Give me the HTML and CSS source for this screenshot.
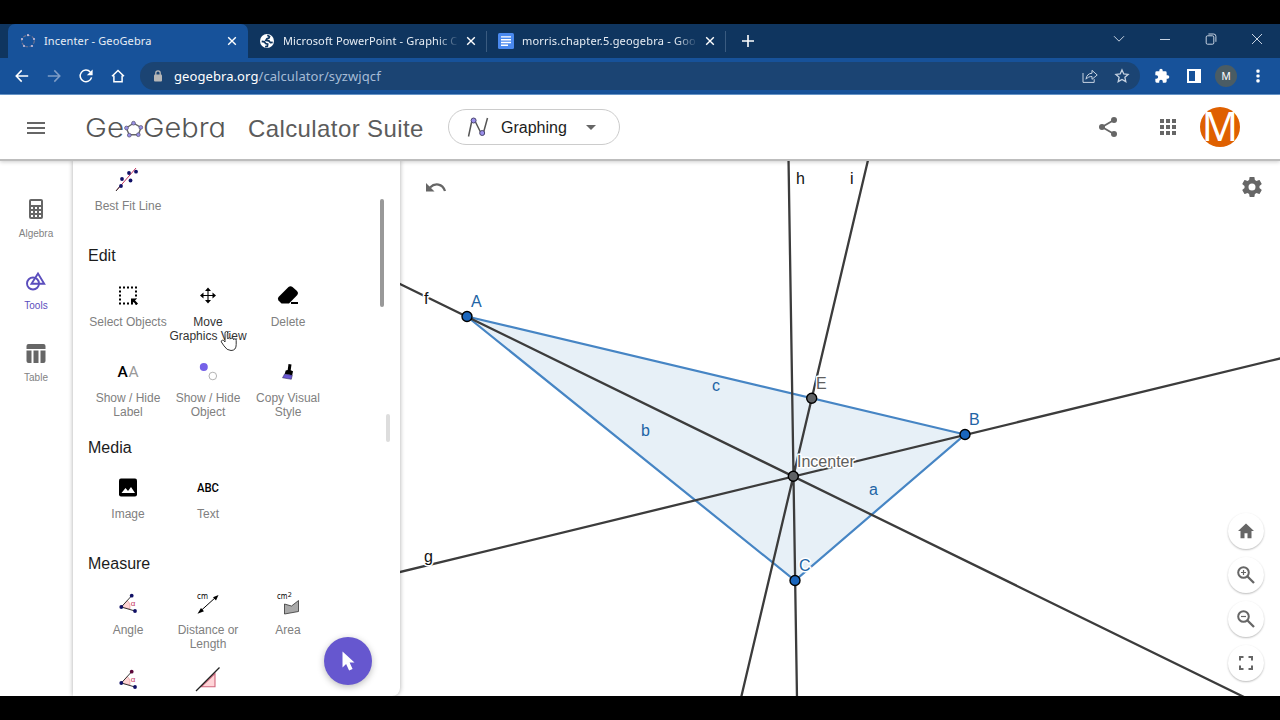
FILE: index.html
```html
<!DOCTYPE html>
<html lang="en">
<head>
<meta charset="utf-8">
<title>Incenter - GeoGebra</title>
<link rel="stylesheet" href="styles.css">
</head>
<body>
<div class="screen">
  <div class="tabs">
    <div class="tab active">
      <svg class="fav" width="16" height="16" viewBox="0 0 16 16"><ellipse cx="8" cy="8" rx="6.3" ry="5.7" fill="none" stroke="#6f7390" stroke-width="1.1" stroke-dasharray="3 1.5"/><g fill="#c6bfdd"><circle cx="8" cy="2.2" r="1.1"/><circle cx="14" cy="6" r="1.1"/><circle cx="12" cy="13" r="1.1"/><circle cx="4" cy="13" r="1.1"/><circle cx="2" cy="6" r="1.1"/></g></svg>
      <span class="tab-title">Incenter - GeoGebra</span>
      <svg class="x" width="10" height="10" viewBox="0 0 10 10"><path d="M1.2 1.2l7.600 7.600M8.800 1.200L1.200 8.800"/></svg>
    </div>
    <div class="tab second">
      <svg class="fav" width="16" height="16" viewBox="0 0 16 16"><circle cx="8" cy="8" r="7" fill="#fff"/><path d="M8.300 2.200l2.200 1.300-.6 1.600-2 .6-1 1.600 3 .6 1.600 1.800 2.200-.3M2.700 8.300l2.500.5 1.500 1.700 2 .6-.4 2.300-2.200.2" fill="none" stroke="#0f355f" stroke-width="1.700"/></svg>
      <span class="tab-title fade">Microsoft PowerPoint - Graphic C</span>
      <svg class="x" width="10" height="10" viewBox="0 0 10 10"><path d="M1.200 1.200l7.600 7.600M8.800 1.200L1.200 8.800"/></svg>
    </div>
    <div class="tab third">
      <svg class="fav" width="16" height="16" viewBox="0 0 16 16"><rect width="16" height="16" rx="1.500" fill="#4a89ee"/><path d="M3 3.900h10M3 6.700h10M3 9.500h10M3 12.300h7" stroke="#fff" stroke-width="1.400"/></svg>
      <span class="tab-title fade">morris.chapter.5.geogebra - Goo</span>
      <svg class="x" width="10" height="10" viewBox="0 0 10 10"><path d="M1.200 1.200l7.600 7.600M8.800 1.200L1.200 8.800"/></svg>
    </div>
    <svg class="plus" width="12" height="12" viewBox="0 0 12 12"><path d="M6 0v12M0 6h12" stroke="#fff" stroke-width="1.600"/></svg>
    <div class="window-controls">
      <svg width="12" height="12" viewBox="0 0 12 12"><path d="M1 3.200l5 5 5-5"/></svg>
      <svg width="12" height="12" viewBox="0 0 12 12"><path d="M1 6.500h10"/></svg>
      <svg width="12" height="12" viewBox="0 0 12 12"><rect x="1.200" y="2.800" width="7.600" height="8.400" rx="1.300"/><path d="M3.400 1h5.200q2.300 0 2.300 2.300v5.500"/></svg>
      <svg width="12" height="12" viewBox="0 0 12 12"><path d="M1 1l10 10M11 1L1 11"/></svg>
    </div>
  </div>

  <div class="toolbar">
    <svg class="nav" width="16" height="16" viewBox="0 0 16 16"><path d="M14.200 8H2.400M7.700 2.400L2.200 8l5.500 5.600"/></svg>
    <svg class="nav dim" width="16" height="16" viewBox="0 0 16 16"><path d="M1.800 8h11.800M8.300 2.400L13.800 8l-5.500 5.600"/></svg>
    <svg class="nav" width="16" height="16" viewBox="0 0 16 16"><path d="M13.600 9.400A5.800 5.800 0 1 1 12.300 4"/><path d="M14.600 1.400v5.800H8.800z" fill="#fff" stroke="none"/></svg>
    <svg class="nav" width="16" height="16" viewBox="0 0 16 16"><path d="M2 8.200L8 2.500l6 5.700M3.900 7.500v6.300h8.200V7.500"/></svg>
    <div class="address">
      <svg width="10" height="12" viewBox="0 0 10 12"><rect x="1" y="4.500" width="8" height="7" rx="1" fill="#b7b7b7"/><path d="M2.800 5V3a2.200 2.200 0 0 1 4.400 0v2" fill="none" stroke="#b7b7b7" stroke-width="1.300"/></svg>
      <span class="url"><b>geogebra.org</b>/calculator/syzwjqcf</span>
      <svg class="line-icon" width="16" height="16" viewBox="0 0 16 16"><path d="M1 5v9.400h11.200v-3.200M4 11.200c.4-3.700 2.600-5.800 6-6V2.300L15.200 7 10 11.300V8.500c-2.500 0-4.500.8-6 2.700z"/></svg>
      <svg class="line-icon" width="16" height="16" viewBox="0 0 16 16"><path d="M8 1.900l1.800 4 4.300.5-3.200 2.900.9 4.300L8 11.400l-3.800 2.200.9-4.300L1.900 6.400l4.300-.5z" stroke-width="1.300"/></svg>
    </div>
    <div class="extensions">
      <svg width="16" height="16" viewBox="0 0 24 24"><path fill="#fff" d="M20.500 11H19V7a2 2 0 0 0-2-2h-4V3.500a2.500 2.500 0 0 0-5 0V5H4a2 2 0 0 0-2 2v3.800h1.500a2.700 2.700 0 0 1 0 5.400H2V20a2 2 0 0 0 2 2h3.800v-1.500a2.700 2.700 0 0 1 5.400 0V22H17a2 2 0 0 0 2-2v-4h1.500a2.500 2.500 0 0 0 0-5z"/></svg>
      <svg width="16" height="16" viewBox="0 0 16 16"><path fill="#fff" fill-rule="evenodd" d="M1 1h14v14H1zM3 3v10h6V3z"/></svg>
      <span class="profile">M</span>
      <svg class="dots" width="4" height="14" viewBox="0 0 4 14"><g fill="#fff"><rect x=".4" y=".5" width="3.200" height="3.200" rx="1"/><rect x=".4" y="5.400" width="3.200" height="3.200" rx="1"/><rect x=".4" y="10.300" width="3.200" height="3.200" rx="1"/></g></svg>
    </div>
  </div>

  <header class="app-header">
    <svg class="burger" width="18" height="12" viewBox="0 0 18 12"><path d="M0 1h18M0 6h18M0 11h18" stroke="#666" stroke-width="1.900"/></svg>
    <svg class="logo" width="140" height="30" viewBox="0 0 140 30">
      <g class="logo-text"><text x="0" y="24.500" textLength="39" lengthAdjust="spacingAndGlyphs">Ge</text><text x="58" y="24.500" textLength="83" lengthAdjust="spacingAndGlyphs">Gebra</text></g>
      <path d="M48.500 11.200L56 15.500 53.300 22.800H44.200L41.300 15.900z" fill="none" stroke="#666" stroke-width="1.400"/>
      <g fill="#9a91e6" stroke="#55516f" stroke-width=".7"><circle cx="48.500" cy="11.200" r="1.900"/><circle cx="55.800" cy="15.400" r="1.900"/><circle cx="53.300" cy="22.700" r="1.900"/><circle cx="44.300" cy="23.200" r="1.900"/><circle cx="41.500" cy="16" r="1.900"/></g>
    </svg>
    <h1 class="suite">Calculator Suite</h1>
    <div class="picker">
      <svg width="24" height="24" viewBox="0 0 24 24"><path d="M2.500 21.500L5.500 7.500Q7.500 2.500 9.500 7l4.700 9.500q2 3.500 3.600 0L21.500 3" fill="none" stroke="#555" stroke-width="1.500"/><g fill="#9a8eea" stroke="#4b4770"><circle cx="7.600" cy="5.500" r="2.500"/><circle cx="16.200" cy="18" r="2.500"/></g></svg>
      <span>Graphing</span>
      <svg width="10" height="5" viewBox="0 0 10 5"><path d="M0 0h10L5 5z" fill="#666"/></svg>
    </div>
    <div class="header-actions">
      <svg width="20" height="22" viewBox="0 0 20 22"><path d="M16 4L4 11l12 7" fill="none" stroke="#666" stroke-width="1.800"/><g fill="#666"><circle cx="16" cy="4" r="3"/><circle cx="4" cy="11" r="3"/><circle cx="16" cy="18" r="3"/></g></svg>
      <svg width="16" height="16" viewBox="0 0 16 16"><path fill="#666" d="M0 0h4v4H0zM6 0h4v4H6zM12 0h4v4h-4zM0 6h4v4H0zM6 6h4v4H6zM12 6h4v4h-4zM0 12h4v4H0zM6 12h4v4H6zM12 12h4v4h-4z"/></svg>
      <span class="avatar">M</span>
    </div>
  </header>

  <main class="workspace">
    <nav class="rail">
      <div class="rail-item"><svg width="24" height="24" viewBox="0 0 24 24"><rect x="5" y="2" width="14" height="20" rx="2" fill="#666"/><path fill="#fff" d="M7 4h10v4H7zM7 10h2v2H7zM11 10h2v2h-2zM15 10h2v2h-2zM7 14h2v2H7zM11 14h2v2h-2zM15 14h2v2h-2zM7 18h2v2H7zM11 18h2v2h-2zM15 18h2v2h-2z"/></svg><span>Algebra</span></div>
      <div class="rail-item selected"><svg width="24" height="24" viewBox="0 0 24 24"><g fill="none" stroke="#5b4ebd" stroke-width="1.900"><circle cx="9" cy="14.500" r="6"/><path d="M14 4.500L7.500 14.700h12.700z"/></g></svg><span>Tools</span></div>
      <div class="rail-item"><svg width="24" height="24" viewBox="0 0 24 24"><path fill="#666" d="M4.500 3h15a2 2 0 0 1 2 2v3h-19V5a2 2 0 0 1 2-2zM2.500 9.500h5V22h-3a2 2 0 0 1-2-2zM9.500 9.500h5V22h-5zM16.500 9.500h5V20a2 2 0 0 1-2 2h-3z"/></svg><span>Table</span></div>
    </nav>

    <section class="tools">
      <div class="grid first">
        <div class="tool"><svg width="32" height="32" viewBox="0 0 32 32"><path d="M4 27L24 4" stroke="#c5345e" fill="none"/><path d="M4 27l5-6" stroke="#333" fill="none"/><g fill="#101066"><circle cx="9" cy="22" r="1.900"/><circle cx="10" cy="15" r="1.900"/><circle cx="17" cy="9" r="1.900"/><circle cx="18.500" cy="16.500" r="1.900"/><circle cx="24" cy="7.700" r="1.900"/></g></svg><span>Best Fit Line</span></div>
      </div>
      <h2>Edit</h2>
      <div class="grid edit">
        <div class="tool"><svg width="32" height="32" viewBox="0 0 32 32"><rect x="8" y="7.500" width="16" height="16" fill="none" stroke="#000" stroke-width="2" stroke-dasharray="2 2" stroke-dashoffset="1"/><path d="M19 18.500h7v7z" fill="#fff"/><path d="M19 18.500h6l-2 2 3 3-1.500 1.500-3-3-2.500 2.500z" fill="#000"/></svg><span>Select Objects</span></div>
        <div class="tool hover"><svg width="32" height="32" viewBox="0 0 32 32"><path d="M16 9v13M9.500 15.500h13" stroke="#000" stroke-width="1.100"/><path d="M16 7.500l3 3.500h-6zM16 23.500l3-3.500h-6zM8 15.500l3.500-3v6zM24 15.500l-3.500-3v6z"/></svg><span>Move<br>Graphics View</span></div>
        <div class="tool"><svg width="32" height="32" viewBox="0 0 32 32"><path d="M16.500 7q2-1.500 4 0l4.500 4q2 2 .3 4L17 23.500h-7.500l-3-3q-1.300-1.800 0-3.500z"/><path d="M19 23h7" stroke="#000" stroke-width="2"/></svg><span>Delete</span></div>
        <div class="tool"><svg width="32" height="32" viewBox="0 0 32 32"><text x="5.500" y="21" class="label-a">A</text><text x="16.500" y="21" class="label-a light">A</text></svg><span>Show / Hide<br>Label</span></div>
        <div class="tool"><svg width="32" height="32" viewBox="0 0 32 32"><circle cx="11.800" cy="11" r="4" fill="#7561e8"/><circle cx="20.800" cy="20" r="3.800" fill="#fff" stroke="#aaa" stroke-width=".9"/></svg><span>Show / Hide<br>Object</span></div>
        <div class="tool"><svg width="32" height="32" viewBox="0 0 32 32"><path d="M16.500 8l3 .6-.8 5.600 2.300 1-.8 4-7.500-1.300 1-3.500 2-.5z"/><path d="M12.600 18l7.700 1.300-1 4-8.800-1.500z" fill="#6957d2" stroke="#20194b" stroke-width=".5"/></svg><span>Copy Visual<br>Style</span></div>
      </div>
      <h2>Media</h2>
      <div class="grid media">
        <div class="tool"><svg width="32" height="32" viewBox="0 0 32 32"><rect x="7" y="6.500" width="18" height="18" rx="2"/><path d="M9.500 21l4-5 2.500 3 3-4 4 6z" fill="#fff"/></svg><span>Image</span></div>
        <div class="tool"><svg width="32" height="32" viewBox="0 0 32 32"><text x="5" y="20" class="abc" textLength="22" lengthAdjust="spacingAndGlyphs">ABC</text></svg><span>Text</span></div>
      </div>
      <h2>Measure</h2>
      <div class="grid measure">
        <div class="tool"><svg width="32" height="32" viewBox="0 0 32 32"><path d="M9.300 19l6-6.500c2.500 2 3 5 2.600 8.400z" fill="#ffd5d5" stroke="#e28b95" stroke-width=".6"/><path d="M19.700 7.700L9.300 19l13.700 4" fill="none" stroke="#333"/><g fill="#101066"><circle cx="19.700" cy="7.700" r="1.900"/><circle cx="9.300" cy="19" r="1.900"/><circle cx="23" cy="23" r="1.900"/></g><text x="18.800" y="17.500" class="alpha">α</text></svg><span>Angle</span></div>
        <div class="tool"><svg width="32" height="32" viewBox="0 0 32 32"><text x="5" y="11" class="unit" textLength="11" lengthAdjust="spacingAndGlyphs">cm</text><path d="M8 23.500L24 9" stroke="#000"/><path d="M26.500 7l-2.500 5.500-3-3.300zM5.500 25.800l6.500-2.500-3-3.300z"/></svg><span>Distance or<br>Length</span></div>
        <div class="tool"><svg width="32" height="32" viewBox="0 0 32 32"><text x="5" y="11" class="unit" textLength="10.500" lengthAdjust="spacingAndGlyphs">cm</text><text x="15.800" y="8.500" class="sup">2</text><path d="M12.500 16l7 2 7-5.500v11l-14 2.500z" fill="#a9a9a9" stroke="#333" stroke-width=".8"/></svg><span>Area</span></div>
        <div class="tool"><svg width="32" height="32" viewBox="0 0 32 32"><path d="M9.300 19l6-6.500c2.500 2 3 5 2.600 8.400z" fill="#ffd5d5" stroke="#e28b95" stroke-width=".6"/><path d="M19.700 7.700L9.300 19l13.700 4" fill="none" stroke="#333"/><g fill="#101066"><circle cx="19.700" cy="7.700" r="1.900" fill="#5b0638"/><circle cx="9.300" cy="19" r="1.900"/><circle cx="23" cy="23" r="1.900"/></g><text x="18.800" y="17.500" class="alpha">α</text></svg></div>
        <div class="tool"><svg width="32" height="32" viewBox="0 0 32 32"><path d="M9.500 22.700H23V9.500z" fill="#ffd5d8" stroke="#d1667c" stroke-width="1.100"/><path d="M4 27L27.500 3.500" stroke="#222" stroke-width="1.200"/></svg></div>
      </div>
      <i class="scroll-thumb"></i>
      <i class="splitter"></i>
      <div class="move-button"><svg width="48" height="48" viewBox="0 0 48 48"><path d="M18.500 14.500v16l3.600-3.500 3 6.500 3.500-1.500-3-6.500h4.900z" fill="#fff"/></svg></div>
    </section>

    <section class="canvas">
      <svg class="graph" width="880" height="536" viewBox="400 160 880 536">
        <path d="M467 316.500L965 434.500 795 580.500z" fill="#e7f0f7"/>
        <path d="M467 316.500L965 434.500 795 580.500z" fill="none" stroke="#4685c4" stroke-width="2.200"/>
        <g stroke="#3c3c3c" stroke-width="2.300"><path d="M398 283L1244 697M398 572.500L1282 358M788.500 158L797 698M868.500 158L741 698"/></g>
        <g stroke="#000" stroke-width="1.400"><g fill="#1a66bd"><circle cx="467" cy="316.500" r="5"/><circle cx="965" cy="434.500" r="5"/><circle cx="795" cy="580.500" r="5"/></g><g fill="#606366"><circle cx="811.700" cy="398.300" r="5"/><circle cx="793.300" cy="476.300" r="5"/></g></g>
        <g class="point-label"><text x="471" y="307">A</text><text x="969" y="425">B</text><text x="799" y="571">C</text><g class="tinted"><text x="712" y="391">c</text><text x="641" y="435.500">b</text><text x="869" y="495">a</text></g><g class="gray"><text x="816" y="389">E</text><text x="797" y="467">Incenter</text></g><g class="dark"><text x="424" y="304">f</text><text x="424" y="562">g</text><text x="796" y="183.500">h</text><text x="850" y="183.500">i</text></g></g>
      </svg>
      <svg class="undo" width="22" height="12" viewBox="0 0 22 12"><path d="M1 1v8.500h8.500z" fill="#666"/><path d="M5 5.500C10 .5 17.500 1.500 20 9" fill="none" stroke="#666" stroke-width="2.300"/></svg>
      <svg class="gear" width="24" height="24" viewBox="0 0 24 24"><path fill="#666" d="M19.430 12.980c.040-.320.070-.640.070-.980s-.030-.660-.070-.980l2.110-1.650c.190-.150.240-.420.120-.640l-2-3.460c-.120-.220-.390-.300-.610-.220l-2.490 1c-.520-.400-1.080-.730-1.690-.980l-.380-2.650C14.460 2.180 14.250 2 14 2h-4c-.250 0-.460.180-.490.420l-.380 2.650c-.610.250-1.170.590-1.690.980l-2.490-1c-.230-.090-.490 0-.610.220l-2 3.460c-.130.220-.070.490.120.640l2.110 1.650c-.040.320-.070.650-.070.980s.030.660.070.980l-2.110 1.650c-.190.150-.240.420-.120.640l2 3.460c.120.220.390.300.610.220l2.490-1c.520.400 1.080.730 1.690.980l.380 2.650c.030.240.240.420.490.420h4c.250 0 .460-.180.490-.420l.380-2.650c.610-.250 1.170-.590 1.690-.980l2.490 1c.230.090.490 0 .610-.220l2-3.460c.120-.220.070-.490-.120-.640zM12 15.500a3.500 3.500 0 1 1 0-7 3.500 3.500 0 0 1 0 7z"/></svg>
      <div class="zoom-controls">
        <span><svg width="20" height="20" viewBox="0 0 20 20"><path d="M10 2.500l8 7.500h-2.500v7.300h-4v-5h-3v5h-4V10H2z" fill="#666"/></svg></span>
        <span><svg width="20" height="20" viewBox="0 0 20 20"><g fill="none" stroke="#666"><circle cx="7.500" cy="7.500" r="5.300" stroke-width="2"/><path d="M11.500 11.500l6.500 6.500" stroke-width="2.300"/><path d="M5 7.500h5M7.500 5v5" stroke-width="1.200"/></g></svg></span>
        <span><svg width="20" height="20" viewBox="0 0 20 20"><g fill="none" stroke="#666"><circle cx="7.500" cy="7.500" r="5.300" stroke-width="2"/><path d="M11.500 11.500l6.500 6.500" stroke-width="2.300"/><path d="M5 7.500h5" stroke-width="1.200"/></g></svg></span>
        <span><svg width="20" height="20" viewBox="0 0 20 20"><path d="M4 7.500V4h3.500M12.500 4H16v3.500M16 12.500V16h-3.500M7.500 16H4v-3.500" fill="none" stroke="#666" stroke-width="2"/></svg></span>
      </div>
    </section>
    <svg class="hand" width="18" height="22" viewBox="0 0 18 22"><path d="M5 12V3.200q0-1.700 1.400-1.700t1.400 1.700V9q.3-1.200 1.500-1.200T10.700 9q.4-1 1.500-1T13.500 9.500q.4-.7 1.400-.7 1.300 0 1.300 1.700v4q0 6-5.200 6-4.200 0-7-4.600l-2.700-4Q1 10.500 2.400 10.200q1.200-.2 2.600 1.800z" fill="#fff" fill-opacity=".75" stroke="#333"/></svg>
  </main>
</div>
</body>
</html>
```
FILE: styles.css
```css
* { box-sizing: border-box; }
body { margin: 0; background: #000; font-family: "Liberation Sans", Arial, sans-serif; }
svg { display: block; flex: none; }
.screen { width: 1280px; height: 720px; padding: 24px 0; display: flex; flex-direction: column; overflow: hidden; }

.tabs { height: 34px; flex: none; display: flex; align-items: center; background: #0f355f; padding-left: 8px; font-family: "Noto Sans", sans-serif; font-size: 11px; letter-spacing: .13px; color: #e8eef5; }
.tab { height: 34px; display: flex; align-items: center; flex: none; }
.tab.active { width: 240px; background: #17529a; border-radius: 7px 7px 0 0; padding: 0 11px 0 12px; }
.tab.second, .tab.third { width: 239px; padding: 0 10px 0 11px; border-right: 1px solid #3a5b80; border-image: linear-gradient(transparent 8px, #3a5b80 8px, #3a5b80 27px, transparent 27px) 1; }
.tab-title { flex: 1; margin: -2px 8px 0; white-space: nowrap; overflow: hidden; }
.tab.second .tab-title, .tab.third .tab-title { margin-right: 5px; }
.tab.third .tab-title { letter-spacing: .2px; }
.fade { mask-image: linear-gradient(90deg, #000 calc(100% - 24px), transparent calc(100% - 2px)); }
.x { fill: none; stroke: #fff; stroke-width: 1.4; }
.plus { margin-left: 16px; }
.window-controls { margin-left: auto; padding-right: 17px; display: flex; gap: 34px; margin-top: -5px; }
.window-controls svg { fill: none; stroke: #c7d3e2; stroke-width: 1; }

.toolbar { height: 37px; flex: none; display: flex; align-items: center; gap: 16px; background: #17529a; padding-left: 14px; border-bottom: 1px solid #6b9bd0; }
.nav { fill: none; stroke: #fff; stroke-width: 1.5; }
.nav.dim { stroke: #7f9dc6; }
.address { width: 1000px; height: 28px; flex: none; margin-left: -2px; border-radius: 14px; background: #1b4473; display: flex; align-items: center; padding: 0 10px 0 13px; }
.url { margin-left: 11px; margin-right: auto; font: 13px "Noto Sans", sans-serif; letter-spacing: .08px; color: #a6bcd6; }
.url b { color: #fff; font-weight: 400; }
.line-icon { fill: none; stroke: #c7d3e2; margin-left: 16px; }
.extensions { display: flex; align-items: center; gap: 16px; margin-left: -2px; }
.profile { width: 22px; height: 22px; border-radius: 50%; background: #4a5c64; color: #fff; font: 11px/22px "Liberation Sans", sans-serif; text-align: center; margin: 0 -3px; }
.dots { margin-left: 6px; }

.app-header { position: relative; z-index: 3; height: 66px; flex: none; margin-bottom: -1px; display: flex; align-items: center; padding-left: 27px; background: #fff; border-bottom: 2px solid #bdbdbd; box-shadow: 0 1px 4px #0003; }
.burger { margin-top: 1px; }
.logo { margin-left: 40px; overflow: visible; }
.logo-text { font: 300 26px Inter, sans-serif; font-feature-settings: "cv11"; fill: #555; }
.suite { margin: 3px 0 0 23px; width: 178px; font-size: 24px; font-weight: 400; letter-spacing: .4px; color: #5c5c5c; white-space: nowrap; }
.picker { margin-left: 22px; width: 172px; height: 36px; border: 1px solid #ccc; border-radius: 18px; display: flex; align-items: center; padding-left: 17px; gap: 11px; font-size: 16px; color: #1c1c1c; }
.picker span { padding-top: 1px; }
.picker svg:last-child { margin: 1px 0 0 8px; }
.header-actions { margin-left: auto; display: flex; align-items: center; padding-right: 40px; }
.header-actions svg:first-child { margin-right: 42px; }
.avatar { margin-left: 24px; width: 40px; height: 40px; border-radius: 50%; background: #df6000; color: #fff; font: 40px/40px "Noto Sans", sans-serif; display: flex; align-items: center; justify-content: center; padding-bottom: 2px; }

.workspace { position: relative; flex: 1; min-height: 0; display: flex; background: #fff; overflow: hidden; }
.rail { width: 72px; flex: none; padding-top: 37px; display: flex; flex-direction: column; gap: 30px; }
.rail-item { height: 42px; display: flex; flex-direction: column; align-items: center; gap: 6px; font-size: 10px; line-height: 14px; color: #828282; }
.rail-item.selected { color: #5b4ebd; }

.tools { position: relative; z-index: 2; width: 327px; margin: 0 0 0 1px; flex: none; overflow: hidden; background: #fff; padding-left: 15px; border-radius: 0 0 8px 0; box-shadow: 0 0 5px #0005; }
.grid { display: grid; grid-template-columns: repeat(3, 80px); align-content: start; }
.grid.first { height: 86px; padding-top: 4px; }
.grid.edit { height: 158px; grid-auto-rows: 76px; }
.grid.media { height: 82px; }
.grid.measure { grid-auto-rows: 76px; }
.tool { display: flex; flex-direction: column; align-items: center; font-size: 12px; line-height: 14px; color: #808080; text-align: center; white-space: nowrap; gap: 3px; }
.tool.hover { color: #333; }
.tools h2 { height: 20px; margin: 0 0 14px; font-size: 16px; line-height: 20px; font-weight: 400; color: #1c1c1c; }
.label-a { font: 500 15.5px Roboto, sans-serif; }
.label-a.light { fill: #999; font-weight: 400; }
.abc { font: 500 12px Roboto, sans-serif; }
.alpha { font: 8px "Liberation Sans", sans-serif; fill: #c5345e; }
.unit { font: 8px "DejaVu Sans", sans-serif; }
.sup { font: 6.5px "DejaVu Sans", sans-serif; }
.scroll-thumb { position: absolute; left: 307px; top: 39px; width: 4px; height: 108px; background: #999; border-radius: 2px; }
.splitter { position: absolute; left: 313px; top: 254px; width: 4px; height: 28px; background: #ddd; border-radius: 2px; }
.move-button { position: absolute; left: 251px; top: 477px; width: 48px; height: 48px; border-radius: 50%; background: #6657cf; box-shadow: 0 2px 7px #0004; }

.canvas { position: relative; flex: 1; background: #fff; }
.point-label { font: 16px "Liberation Sans", sans-serif; fill: #2264a5; stroke: #fff; stroke-width: 3px; paint-order: stroke; stroke-linejoin: round; }
.tinted { stroke: #e7f0f7; }
.gray { fill: #606060; }
.dark { fill: #111; }
.undo { position: absolute; left: 25px; top: 22px; }
.gear { position: absolute; right: 16px; top: 15px; }
.zoom-controls { position: absolute; right: 16px; top: 353px; display: flex; flex-direction: column; gap: 8px; }
.zoom-controls span { width: 36px; height: 36px; border-radius: 50%; background: #fff; box-shadow: 0 1px 2px #0004; display: flex; align-items: center; justify-content: center; }
.hand { position: absolute; z-index: 4; left: 220px; top: 170px; }
```
